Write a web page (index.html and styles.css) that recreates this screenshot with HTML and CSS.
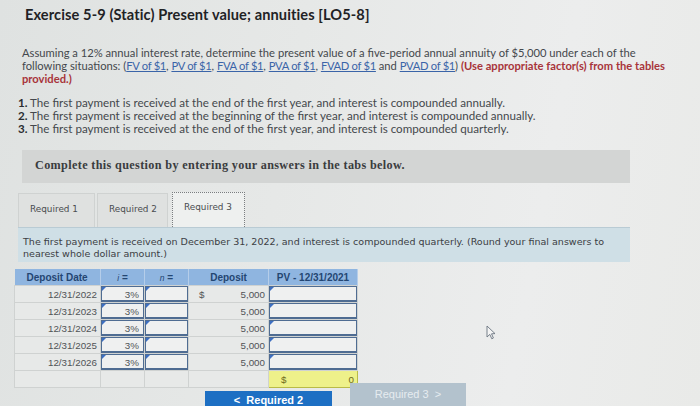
FILE: index.html
```html
<!DOCTYPE html>
<html>
<head>
<meta charset="utf-8">
<link rel="stylesheet" href="styles.css">
</head>
<body>
<div class="page">
  <h1 class="title">Exercise 5-9 (Static) Present value; annuities [LO5-8]</h1>
  <p class="intro">Assuming a 12% annual interest rate, determine the present value of a five-period annual annuity of $5,000 under each of the<br>following situations: (<a class="lnk">FV of $1</a>, <a class="lnk">PV of $1</a>, <a class="lnk">FVA of $1</a>, <a class="lnk">PVA of $1</a>, <a class="lnk">FVAD of $1</a> and <a class="lnk">PVAD of $1</a>) <b class="red">(Use appropriate factor(s) from the tables<br>provided.)</b></p>
  <div class="list">
    <div><b>1.</b> The first payment is received at the end of the first year, and interest is compounded annually.</div>
    <div><b>2.</b> The first payment is received at the beginning of the first year, and interest is compounded annually.</div>
    <div><b>3.</b> The first payment is received at the end of the first year, and interest is compounded quarterly.</div>
  </div>
  <div class="complete">Complete this question by entering your answers in the tabs below.</div>
  <div class="tabs">
    <div class="tab">Required 1</div>
    <div class="tab">Required 2</div>
    <div class="tab active">Required 3</div>
  </div>
  <div class="instr">The first payment is received on December 31, 2022, and interest is compounded quarterly. (Round your final answers to<br>nearest whole dollar amount.)</div>
  <table class="grid">
    <colgroup><col class="c1"><col class="c2"><col class="c3"><col class="c4"><col class="c5"></colgroup>
    <thead>
      <tr><th class="left">Deposit Date</th><th><i>i</i> =</th><th><i>n</i> =</th><th>Deposit</th><th>PV - 12/31/2021</th></tr>
    </thead>
    <tbody>
      <tr><td class="date">12/31/2022</td><td class="in"><div class="inp">3%</div></td><td class="in"><div class="inp"></div></td><td class="dep"><span>$</span><span>5,000</span></td><td class="in"><div class="inp"></div></td></tr>
      <tr><td class="date">12/31/2023</td><td class="in"><div class="inp">3%</div></td><td class="in"><div class="inp"></div></td><td class="dep"><span></span><span>5,000</span></td><td class="in"><div class="inp"></div></td></tr>
      <tr><td class="date">12/31/2024</td><td class="in"><div class="inp">3%</div></td><td class="in"><div class="inp"></div></td><td class="dep"><span></span><span>5,000</span></td><td class="in"><div class="inp"></div></td></tr>
      <tr><td class="date">12/31/2025</td><td class="in"><div class="inp">3%</div></td><td class="in"><div class="inp"></div></td><td class="dep"><span></span><span>5,000</span></td><td class="in"><div class="inp"></div></td></tr>
      <tr><td class="date">12/31/2026</td><td class="in"><div class="inp">3%</div></td><td class="in"><div class="inp"></div></td><td class="dep"><span></span><span>5,000</span></td><td class="in"><div class="inp"></div></td></tr>
      <tr><td></td><td></td><td></td><td></td><td class="total"><span>$</span><span>0</span></td></tr>
    </tbody>
  </table>
  <div class="nav">
    <div class="btn prev">&lt; &nbsp;Required 2</div>
    <div class="btn next">Required 3 &nbsp;&gt;</div>
  </div>
  <svg class="cursor" width="10" height="15" viewBox="0 0 10 15"><path d="M1 1 L1 12 L3.8 9.4 L5.8 13.8 L7.4 13 L5.5 8.8 L9 8.6 Z" fill="#f4f4f4" stroke="#6a7480" stroke-width="0.9" stroke-linejoin="round"/></svg>
</div>
</body>
</html>
```
FILE: styles.css
```css
html, body {
  margin: 0;
  padding: 0;
}
body {
  width: 700px;
  height: 406px;
  overflow: hidden;
  background: linear-gradient(100deg, #dfe2e1 0%, #e6e8e7 40%, #eceded 75%, #e9eae8 100%);
  font-family: Lato, "Open Sans", sans-serif;
  color: #383b3e;
}
.page {
  position: relative;
  height: 406px;
}
.title {
  margin: 0;
  padding: 5px 0 0 25px;
  font-size: 14.6px;
  line-height: 19px;
  font-weight: 700;
  letter-spacing: 0.1px;
  color: #1f2225;
}
.intro {
  margin: 22px 0 0 22px;
  font-size: 11.2px;
  line-height: 13px;
  color: #44484c;
  white-space: nowrap;
}
.lnk {
  color: #3a64a8;
  text-decoration: underline;
  letter-spacing: -0.3px;
}
.red {
  color: #a8343a;
  font-weight: 700;
}
.list {
  margin: 11px 0 0 18px;
  font-size: 11.6px;
  line-height: 13px;
  color: #44484c;
  white-space: nowrap;
}
.list b {
  color: #2a2d30;
}
.complete {
  margin: 15px 0 0 22px;
  width: 608px;
  height: 33px;
  box-sizing: border-box;
  padding: 8px 0 0 13px;
  background: #d3d5d4;
  font-family: "Liberation Serif", serif;
  font-weight: 700;
  font-size: 12.2px;
  letter-spacing: 0.35px;
  color: #3a3c3e;
}
.tabs {
  display: flex;
  margin: 10px 0 0 18px;
  height: 34px;
  gap: 2px;
}
.tab {
  box-sizing: border-box;
  height: 34px;
  padding: 10px 0 0 11px;
  font-family: "DejaVu Sans", sans-serif;
  font-size: 8.9px;
  color: #4a4d50;
  background: #dfe1e0;
  border: 1px solid #cfd2d1;
  border-bottom: none;
}
.tab:nth-child(1) { width: 77px; }
.tab:nth-child(2) { width: 71px; }
.tab.active {
  width: 73px;
  margin-left: 2px;
  margin-top: -1px;
  height: 35px;
  padding-top: 9px;
  background: #eef0ef;
  border: 1px dotted #7a7d80;
  border-bottom: none;
}
.instr {
  margin: 0 0 0 18px;
  width: 612px;
  height: 35px;
  box-sizing: border-box;
  padding: 8px 0 0 5px;
  background: #cfdfe6;
  border-top: 1px solid #b9cbd4;
  font-family: "DejaVu Sans", sans-serif;
  font-size: 9.55px;
  line-height: 12px;
  color: #3c4044;
  white-space: nowrap;
}
.grid {
  margin: 7px 0 0 14px;
  border-collapse: collapse;
  table-layout: fixed;
  width: 343px;
  font-family: "Liberation Sans", Arial, sans-serif;
  font-size: 9.8px;
}
.c1 { width: 86px; }
.c2 { width: 44px; }
.c3 { width: 44px; }
.c4 { width: 80px; }
.c5 { width: 89px; }
.grid th {
  height: 16px;
  padding: 0;
  background: #8fb5e0;
  color: #244672;
  font-weight: 700;
  font-size: 10px;
  border-right: 1px solid #b5cde9;
  text-align: center;
}
.grid th.left {
  text-align: left;
  padding-left: 12px;
}
.grid th i {
  font-weight: 400;
  font-size: 8.5px;
}
.grid td {
  height: 16px;
  padding: 0;
  background: #e7e9e8;
  border: 1px solid #cfd2d1;
  color: #505356;
}
.grid td.date {
  text-align: right;
  padding-right: 3px;
}
.grid td.in {
  padding: 0;
  position: relative;
}
.inp {
  position: relative;
  box-sizing: border-box;
  height: 16px;
  border: 1px solid #4f6c92;
  border-bottom-width: 2px;
  background: #eff0f0;
  text-align: right;
  padding: 2px 4px 0 0;
  color: #505356;
}
.inp::before {
  content: "";
  position: absolute;
  left: 0;
  top: 0;
  border-top: 4px solid #3d6fc2;
  border-right: 4px solid transparent;
}
.grid td.dep {
  padding: 0 3px 0 10px;
}
.dep, .total {
  white-space: nowrap;
}
.grid td.dep span:first-child,
.grid td.total span:first-child {
  float: left;
}
.grid td.dep span:last-child,
.grid td.total span:last-child {
  float: right;
}
.grid td.total {
  background: #eef18a;
  border: 1px solid #b9bb48;
  padding: 0 3px 0 12px;
  color: #6d6a20;
}
.nav {
  display: flex;
  align-items: flex-start;
  margin: 3px 0 0 205px;
  gap: 18px;
}
.btn {
  height: 24px;
  box-sizing: border-box;
  padding-top: 3px;
  font-family: "Liberation Sans", Arial, sans-serif;
  font-weight: 700;
  font-size: 11px;
  text-align: center;
}
.btn.prev {
  width: 127px;
  background: #1d6fc3;
  color: #ffffff;
}
.btn.next {
  width: 116px;
  margin-top: -8px;
  padding-top: 5px;
  background: #b3c2cd;
  color: #e6ecf0;
  font-weight: 400;
}
.cursor {
  position: absolute;
  left: 486px;
  top: 325px;
}
```
